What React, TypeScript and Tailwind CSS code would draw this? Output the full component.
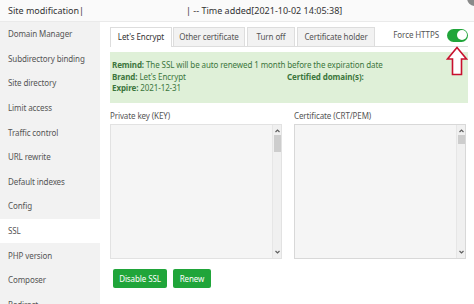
import React from "react";

const items = [
  "Domain Manager",
  "Subdirectory binding",
  "Site directory",
  "Limit access",
  "Traffic control",
  "URL rewrite",
  "Default indexes",
  "Config",
  "SSL",
  "PHP version",
  "Composer",
  "Redirect",
];

function Scrollbar({ thumbH }: { thumbH: number }) {
  return (
    <div className="w-[9px] flex flex-col items-center bg-[#f0f0f0] border-l border-[#e6e6e6]">
      <svg width="7" height="8" viewBox="0 0 7 8" className="mt-[2px]">
        <path d="M1.5 5 L3.5 3 L5.5 5" stroke="#606060" strokeWidth="1.2" fill="none" />
      </svg>
      <div className="w-[7px] bg-[#cdcdcd]" style={{ height: thumbH }} />
      <div className="flex-1" />
      <svg width="7" height="8" viewBox="0 0 7 8" className="mb-[2px]">
        <path d="M1.5 3 L3.5 5 L5.5 3" stroke="#606060" strokeWidth="1.2" fill="none" />
      </svg>
    </div>
  );
}

export default function App() {
  return (
    <div
      className="relative w-[474px] h-[304px] overflow-hidden bg-white text-[8px] tracking-[-0.1px] text-[#444]"
      style={{ fontFamily: '"Noto Sans", "Open Sans", sans-serif' }}
    >
      <div className="absolute -right-[9px] -top-[10px] w-[16px] h-[16px] rounded-full bg-[#8a8a8a]" />
      <div className="h-[22px] flex items-center pl-[8px] bg-[#fafafa] border-b border-[#eaeaea] text-[9px] tracking-normal text-[#333]">
        <span className="w-[178px]">Site modification|</span>
        <span>| -- Time added[2021-10-02 14:05:38]</span>
      </div>
      <div className="flex h-[282px]">
        <div className="w-[100px] bg-[#f2f2f2] flex flex-col">
          {items.map((t) => (
            <div
              key={t}
              className={
                "h-[24.6px] shrink-0 flex items-center pl-[8px] text-[#555] " +
                (t === "SSL" ? "bg-white" : "")
              }
            >
              {t}
            </div>
          ))}
        </div>
        <div className="flex-1 pl-[10px] pr-[6px] pt-[5px] flex flex-col">
          <div className="h-[20px] flex items-end border-b border-[#ddd]">
            <div className="h-[20px] w-[62px] flex items-center justify-center bg-white border border-b-0 border-[#ddd] -mb-px pb-px text-[#333]">
              Let's Encrypt
            </div>
            <div className="h-[19px] w-[72px] ml-[1px] flex items-center justify-center bg-[#f2f2f2] border border-b-0 border-[#ddd] text-[#555]">
              Other certificate
            </div>
            <div className="h-[19px] w-[48px] ml-[2px] flex items-center justify-center bg-[#f2f2f2] border border-b-0 border-[#ddd] text-[#555]">
              Turn off
            </div>
            <div className="h-[19px] w-[78px] ml-[2px] flex items-center justify-center bg-[#f2f2f2] border border-b-0 border-[#ddd] text-[#555]">
              Certificate holder
            </div>
            <div className="flex-1" />
            <div className="h-[20px] flex items-center pb-[2px] text-[#555]">
              <span className="mr-[8px]">Force HTTPS</span>
              <div className="w-[21px] h-[13px] rounded-full bg-[#20a53a] flex items-center justify-end pr-[1.5px]">
                <div className="w-[10px] h-[10px] rounded-full bg-white" />
              </div>
            </div>
          </div>
          <div className="relative mt-[5px] h-[51px] bg-[#dff0d8] text-[#3c763d] px-[2px] pt-[7px] leading-[11.7px]">
            <svg
              width="22"
              height="30"
              viewBox="0 0 22 30"
              className="absolute right-0 -top-[6px]"
            >
              <path
                d="M11 1.5 L20.5 13 L15.5 13 L15.5 28.5 L6.5 28.5 L6.5 13 L1.5 13 Z"
                fill="white"
                stroke="#c8102e"
                strokeWidth="1.6"
                strokeLinejoin="miter"
              />
            </svg>
            <div>
              <b>Remind:</b> The SSL will be auto renewed 1 month before the expiration date
            </div>
            <div className="flex">
              <span className="w-[175px]">
                <b>Brand:</b> Let's Encrypt
              </span>
              <b>Certified domain(s):</b>
            </div>
            <div>
              <b>Expire:</b> 2021-12-31
            </div>
          </div>
          <div className="flex gap-[12px] mt-[7px]">
            <div className="w-[172px] flex flex-col">
              <div className="h-[12px] leading-[12px] text-[#555] mb-[2px]">Private key (KEY)</div>
              <div className="h-[135px] flex bg-[#f5f5f5] border border-[#e2e2e2]">
                <div className="flex-1" />
                <Scrollbar thumbH={17} />
              </div>
            </div>
            <div className="w-[172px] flex flex-col">
              <div className="h-[12px] leading-[12px] text-[#555] mb-[2px]">Certificate (CRT/PEM)</div>
              <div className="h-[135px] flex bg-[#f5f5f5] border border-[#d8d8d8]">
                <div className="flex-1" />
                <Scrollbar thumbH={9} />
              </div>
            </div>
          </div>
          <div className="flex gap-[6px] mt-[10px] pl-[3px]">
            <div className="h-[19px] w-[54px] flex items-center justify-center rounded-[2px] bg-[#20a53a] text-white">
              Disable SSL
            </div>
            <div className="h-[19px] w-[38px] flex items-center justify-center rounded-[2px] bg-[#20a53a] text-white">
              Renew
            </div>
          </div>
        </div>
      </div>
    </div>
  );
}
